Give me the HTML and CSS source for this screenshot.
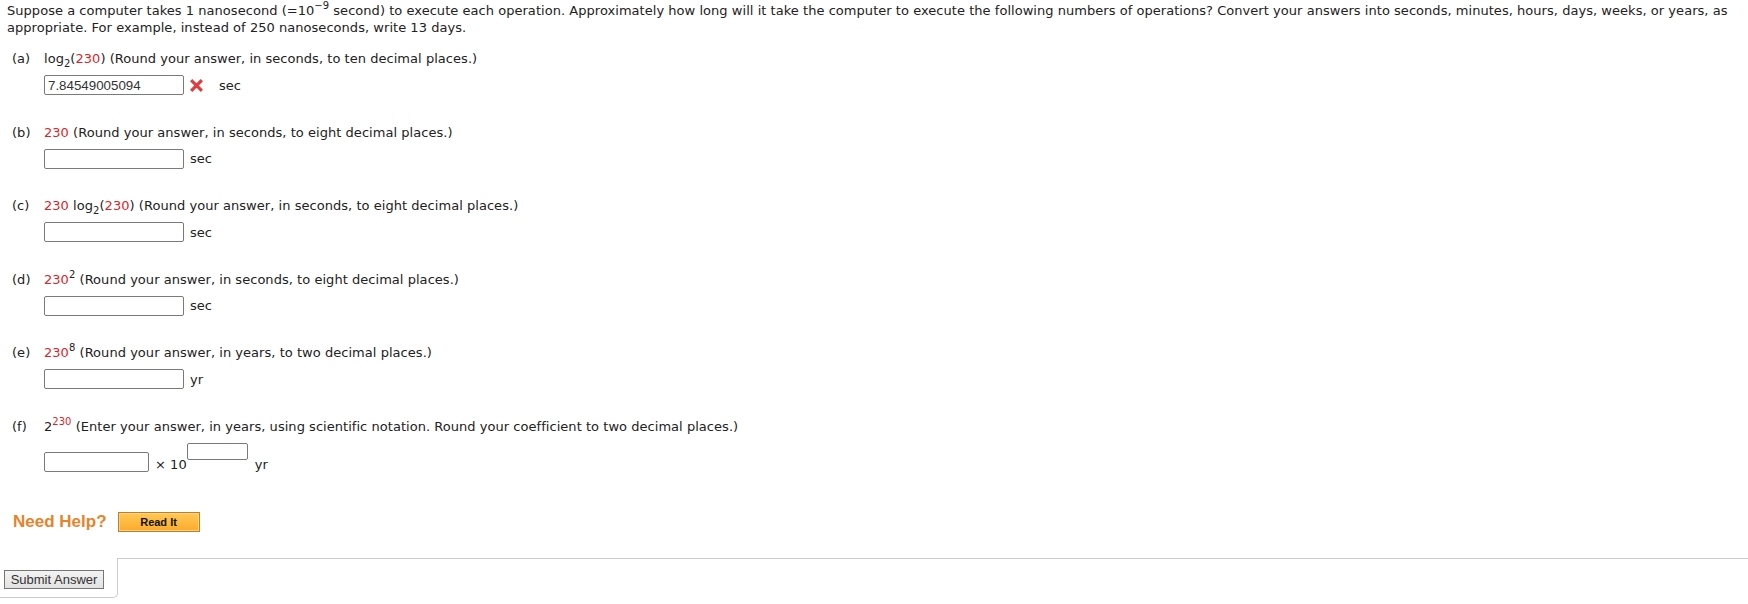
FILE: index.html
```html
<!DOCTYPE html>
<html lang="en">
<head>
<meta charset="utf-8">
<title>Question</title>
<link rel="stylesheet" href="styles.css">
</head>
<body>
<div class="question">
  <p class="intro">Suppose a computer takes 1 nanosecond (=10<sup>−9</sup> second) to execute each operation. Approximately how long will it take the computer to execute the following numbers of operations? Convert your answers into seconds, minutes, hours, days, weeks, or years, as appropriate. For example, instead of 250 nanoseconds, write 13 days.</p>
  <ol class="parts">
    <li class="part">
      <span class="label">(a)</span>
      <div class="prompt">log<sub>2</sub>(<span class="red">230</span>) (Round your answer, in seconds, to ten decimal places.)</div>
      <div class="answer">
        <input class="field" type="text" value="7.84549005094">
        <svg class="wrong" width="13" height="13" viewBox="0 0 13 13" aria-label="incorrect"><path d="M2.3 2.3 L10.7 10.7 M10.7 2.3 L2.3 10.7" stroke="#e13b3e" stroke-width="3.2" stroke-linecap="square"/></svg>
        <span class="unit unit-after-mark">sec</span>
      </div>
    </li>
    <li class="part">
      <span class="label">(b)</span>
      <div class="prompt"><span class="red">230</span> (Round your answer, in seconds, to eight decimal places.)</div>
      <div class="answer"><input class="field" type="text"><span class="unit">sec</span></div>
    </li>
    <li class="part">
      <span class="label">(c)</span>
      <div class="prompt"><span class="red">230</span> log<sub>2</sub>(<span class="red">230</span>) (Round your answer, in seconds, to eight decimal places.)</div>
      <div class="answer"><input class="field" type="text"><span class="unit">sec</span></div>
    </li>
    <li class="part">
      <span class="label">(d)</span>
      <div class="prompt"><span class="red">230</span><sup>2</sup> (Round your answer, in seconds, to eight decimal places.)</div>
      <div class="answer"><input class="field" type="text"><span class="unit">sec</span></div>
    </li>
    <li class="part">
      <span class="label">(e)</span>
      <div class="prompt"><span class="red">230</span><sup>8</sup> (Round your answer, in years, to two decimal places.)</div>
      <div class="answer"><input class="field" type="text"><span class="unit">yr</span></div>
    </li>
    <li class="part">
      <span class="label">(f)</span>
      <div class="prompt">2<sup class="red">230</sup> (Enter your answer, in years, using scientific notation. Round your coefficient to two decimal places.)</div>
      <div class="answer sci">
        <input class="field coeff" type="text">
        <span class="times">× 10</span>
        <input class="field expo" type="text">
        <span class="unit low">yr</span>
      </div>
    </li>
  </ol>
</div>
<div class="help">
  <span class="help-title">Need Help?</span>
  <button class="read-it" type="button">Read It</button>
</div>
<div class="submit-bar">
  <div class="submit-tab"><button class="submit" type="button">Submit Answer</button></div>
  <div class="submit-rule"></div>
</div>
</body>
</html>
```
FILE: styles.css
```css
html, body {
  margin: 0;
  padding: 0;
  background: #ffffff;
}

body {
  font-family: "DejaVu Sans", Verdana, sans-serif;
  font-size: 13px;
  letter-spacing: 0.04px;
  color: #222222;
}

.question {
  padding: 2px 0 0 7px;
}

.intro {
  margin: 0;
  line-height: 17px;
}

sup, sub {
  font-size: 10px;
  line-height: 0;
  position: relative;
  vertical-align: baseline;
}

sup {
  top: -6px;
}

sub {
  top: 4px;
}

.red {
  color: #d9262a;
}

.parts {
  list-style: none;
  margin: 14px 0 0;
  padding: 0 0 0 5px;
}

.part {
  display: grid;
  grid-template-columns: 32px auto;
  row-gap: 8px;
  margin-bottom: 28.5px;
}

.part:last-child {
  margin-bottom: 0;
}

.label {
  grid-column: 1;
  grid-row: 1;
  line-height: 17px;
}

.prompt {
  grid-column: 2;
  grid-row: 1;
  line-height: 17px;
}

.answer {
  grid-column: 2;
  grid-row: 2;
  display: flex;
  align-items: center;
  height: 20px;
}

.field {
  box-sizing: border-box;
  width: 140px;
  height: 20px;
  margin: 0;
  padding: 0 3px;
  border: 1px solid #7a7a7a;
  border-radius: 2px;
  font-family: "Liberation Sans", Arial, sans-serif;
  font-size: 13.33px;
  letter-spacing: 0;
  color: #333333;
  background: #ffffff;
}

.unit {
  margin-left: 6px;
  line-height: 17px;
}

.wrong {
  display: block;
  margin-left: 6px;
}

.unit-after-mark {
  margin-left: 16px;
}

.answer.sci {
  align-items: flex-start;
  height: 29px;
}

.coeff {
  width: 105px;
  margin-top: 9px;
}

.times {
  margin-left: 6px;
  margin-top: 13px;
  line-height: 17px;
}

.expo {
  width: 61px;
  height: 17px;
}

.unit.low {
  margin-left: 7px;
  margin-top: 13px;
}

.help {
  display: flex;
  align-items: center;
  gap: 11px;
  margin-top: 40px;
  padding-left: 13px;
  height: 20px;
}

.help-title {
  font-family: "Liberation Sans", Arial, sans-serif;
  font-weight: bold;
  font-size: 17px;
  letter-spacing: 0;
  color: #e5842a;
}

.read-it {
  box-sizing: border-box;
  width: 82px;
  height: 20px;
  margin: 0;
  padding: 0;
  border: 1px solid #c9792c;
  background: linear-gradient(#ffc955, #fbab2c);
  box-shadow: inset 0 0 0 1px #ffd77d;
  font-family: "Liberation Sans", Arial, sans-serif;
  font-weight: bold;
  font-size: 11px;
  letter-spacing: 0;
  color: #111111;
}

.submit-bar {
  display: flex;
  margin-top: 26px;
}

.submit-tab {
  padding: 12px 13px 8px 4px;
  border-right: 1px solid #cccccc;
  border-bottom: 1px solid #cccccc;
  border-bottom-right-radius: 5px;
}

.submit {
  box-sizing: border-box;
  display: block;
  width: 100px;
  height: 19px;
  margin: 0;
  padding: 0;
  border: 1px solid #767676;
  background: linear-gradient(#f3f3f3, #e2e2e2);
  font-family: "Liberation Sans", Arial, sans-serif;
  font-size: 13px;
  letter-spacing: 0;
  color: #333333;
}

.submit-rule {
  flex: 1;
  border-top: 1px solid #cccccc;
}
```
